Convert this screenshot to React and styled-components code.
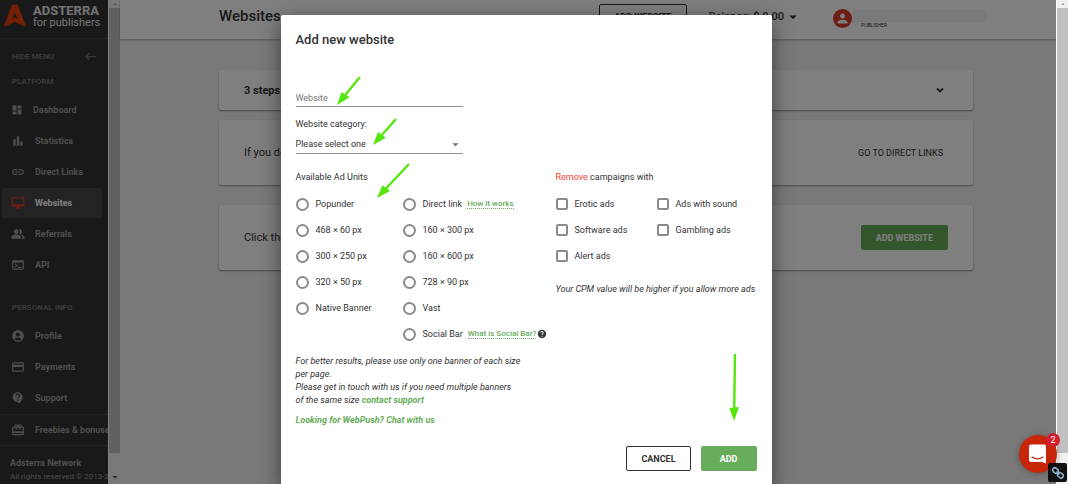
import styled, { createGlobalStyle } from "styled-components";
import {
  MdAccountCircle,
  MdArrowDropDown,
  MdArrowDropUp,
  MdBarChart,
  MdContactSupport,
  MdDashboard,
  MdHelp,
  MdKeyboardBackspace,
  MdLink,
  MdOutlineDesktopMac,
  MdPayment,
  MdPeopleAlt,
  MdPerson,
  MdRedeem,
  MdTerminal,
} from "react-icons/md";

const platformLinks = [
  { label: "Dashboard", icon: MdDashboard, small: true },
  { label: "Statistics", icon: MdBarChart },
  { label: "Direct Links", icon: MdLink },
  { label: "Websites", icon: MdOutlineDesktopMac, active: true },
  { label: "Referrals", icon: MdPeopleAlt },
  { label: "API", icon: MdTerminal },
];

const personalLinks = [
  { label: "Profile", icon: MdAccountCircle },
  { label: "Payments", icon: MdPayment },
  { label: "Support", icon: MdContactSupport },
];

const leftUnits = [
  "Popunder",
  "468 × 60 px",
  "300 × 250 px",
  "320 × 50 px",
  "Native Banner",
];

const rightUnits = [
  { label: "Direct link", link: "How it works" },
  { label: "160 × 300 px" },
  { label: "160 × 600 px" },
  { label: "728 × 90 px" },
  { label: "Vast" },
  { label: "Social Bar", link: "What is Social Bar?", help: true },
];

const leftFilters = ["Erotic ads", "Software ads", "Alert ads"];
const rightFilters = ["Ads with sound", "Gambling ads"];

// x1, y1 is the tail, x2, y2 is the tip
const arrows = [
  { x1: 360, y1: 77, x2: 337, y2: 105 },
  { x1: 396, y1: 119, x2: 373, y2: 145 },
  { x1: 409, y1: 164, x2: 377, y2: 198 },
  { x1: 735, y1: 354, x2: 734, y2: 421 },
];

const Arrow = ({ x1, y1, x2, y2 }) => {
  const length = Math.hypot(x2 - x1, y2 - y1);
  const angle = (Math.atan2(y2 - y1, x2 - x1) * 180) / Math.PI;
  return (
    <g transform={`translate(${x1} ${y1}) rotate(${angle})`}>
      <line
        x1="1"
        y1="0"
        x2={length - 11}
        y2="0"
        stroke="#55e60f"
        strokeWidth="2.4"
        strokeLinecap="round"
      />
      <path
        d={`M${length} 0 L${length - 14} -4.8 L${length - 13} 4.8 Z`}
        fill="#55e60f"
      />
    </g>
  );
};

const MenuItem = ({ item }) => {
  const Icon = item.icon;
  return (
    <MenuLink href="#" $active={item.active} $small={item.small}>
      <Icon />
      {item.label}
    </MenuLink>
  );
};

const Sidebar = () => (
  <SideWrapper>
    <SideContent>
      <Logo href="#">
        <svg width="22" height="23" viewBox="0 0 22 23">
          <path
            d="M8.6 1.2h4.6L20.9 21.8 10.9 17.2 0.9 21.8Z M10.9 6.4 6.6 16.8 10.9 14 15.2 16.8Z"
            fill="#e6400d"
            stroke="#e6400d"
            strokeWidth="1.4"
            strokeLinejoin="round"
            fillRule="evenodd"
          />
        </svg>
        <LogoText>
          <LogoName>ADSTERRA</LogoName>
          <LogoSub>for publishers</LogoSub>
        </LogoText>
      </Logo>
      <HideMenu type="button">
        HIDE MENU
        <MdKeyboardBackspace size={15} />
      </HideMenu>
      <MenuTitle>PLATFORM</MenuTitle>
      <Menu>
        {platformLinks.map((item) => (
          <MenuItem key={item.label} item={item} />
        ))}
      </Menu>
      <MenuTitle $spaced>PERSONAL INFO</MenuTitle>
      <Menu>
        {personalLinks.map((item) => (
          <MenuItem key={item.label} item={item} />
        ))}
      </Menu>
      <Extra>
        <MenuItem item={{ label: "Freebies & bonuses", icon: MdRedeem }} />
      </Extra>
      <Footer>
        <FooterName>Adsterra Network</FooterName>
        <FooterText>All rights reserved © 2013-2021</FooterText>
      </Footer>
    </SideContent>
    <ScrollBar>
      <MdArrowDropUp />
      <ScrollThumb />
      <MdArrowDropDown />
    </ScrollBar>
  </SideWrapper>
);

const AddWebsiteModal = () => (
  <Modal role="dialog" aria-labelledby="modal-title">
    <ModalTitle id="modal-title">Add new website</ModalTitle>
    <TextInput type="text" placeholder="Website" aria-label="Website" />
    <FieldLabel htmlFor="category">Website category:</FieldLabel>
    <SelectHolder>
      <Select id="category">
        <option>Please select one</option>
      </Select>
      <MdArrowDropDown />
    </SelectHolder>
    <Columns>
      <div>
        <GroupTitle>Available Ad Units</GroupTitle>
        <Options $first={107}>
          <OptionList>
            {leftUnits.map((unit) => (
              <Option key={unit}>
                <OptionLabel>
                  <Radio type="radio" name="unit" />
                  {unit}
                </OptionLabel>
              </Option>
            ))}
          </OptionList>
          <OptionList>
            {rightUnits.map((unit) => (
              <Option key={unit.label}>
                <OptionLabel>
                  <Radio type="radio" name="unit" />
                  {unit.label}
                </OptionLabel>
                {unit.link && <HintLink href="#">{unit.link}</HintLink>}
                {unit.help && <MdHelp size={10} />}
              </Option>
            ))}
          </OptionList>
        </Options>
        <Notes>
          <Note>
            For better results, please use only one banner of each size per
            page.
            <br />
            Please get in touch with us if you need multiple banners
            <br />
            of the same size <NoteLink href="#">contact support</NoteLink>
          </Note>
          <Note>
            <NoteLink href="#">Looking for WebPush? Chat with us</NoteLink>
          </Note>
        </Notes>
      </div>
      <div>
        <GroupTitle>
          <Red>Remove</Red> campaigns with
        </GroupTitle>
        <Options $first={101}>
          <OptionList>
            {leftFilters.map((filter) => (
              <Option key={filter}>
                <OptionLabel>
                  <Checkbox type="checkbox" />
                  {filter}
                </OptionLabel>
              </Option>
            ))}
          </OptionList>
          <OptionList>
            {rightFilters.map((filter) => (
              <Option key={filter}>
                <OptionLabel>
                  <Checkbox type="checkbox" />
                  {filter}
                </OptionLabel>
              </Option>
            ))}
          </OptionList>
        </Options>
        <CpmNote>Your CPM value will be higher if you allow more ads</CpmNote>
      </div>
    </Columns>
    <ModalButtons>
      <OutlineButton type="button">CANCEL</OutlineButton>
      <GreenButton type="button">ADD</GreenButton>
    </ModalButtons>
  </Modal>
);

export default function App() {
  return (
    <>
      <GlobalStyle />
      <Container>
        <Page>
          <Sidebar />
          <Main>
            <Header>
              <PageTitle>Websites</PageTitle>
              <HeaderRight>
                <OutlineButton type="button">ADD WEBSITE</OutlineButton>
                <Balance>
                  <span>
                    Balance: <b>$ 0.00</b>
                  </span>
                  <MdArrowDropDown size={18} />
                </Balance>
                <User>
                  <Avatar>
                    <MdPerson size={15} />
                  </Avatar>
                  <UserInfo>
                    <UserName />
                    <UserRole>PUBLISHER</UserRole>
                  </UserInfo>
                </User>
              </HeaderRight>
            </Header>
            <Cards>
              <Card $small>
                <CardTitle>3 steps</CardTitle>
                <Chevron type="button" aria-label="Expand">
                  <svg width="16" height="14" viewBox="0 0 16 14">
                    <path
                      d="M5 5.5l3 3 3-3"
                      fill="none"
                      stroke="currentColor"
                      strokeWidth="1.8"
                    />
                  </svg>
                </Chevron>
              </Card>
              <Card>
                <CardText>If you do</CardText>
                <CardLink href="#">GO TO DIRECT LINKS</CardLink>
              </Card>
              <Card $spaced>
                <CardText>Click the</CardText>
                <GreenButton type="button">ADD WEBSITE</GreenButton>
              </Card>
            </Cards>
          </Main>
          <Overlay>
            <AddWebsiteModal />
          </Overlay>
        </Page>
        <ScrollBar>
          <MdArrowDropUp />
          <ScrollThumb />
          <MdArrowDropDown />
        </ScrollBar>
        <Arrows width="1068" height="484">
          {arrows.map((arrow) => (
            <Arrow key={arrow.y1} {...arrow} />
          ))}
        </Arrows>
        <Chat type="button" aria-label="Open chat">
          <svg width="20" height="20" viewBox="0 0 20 20">
            <path
              d="M3 0.5h13a2 2 0 0 1 2 2v17l-4-1.5h-11a2 2 0 0 1-2-2v-13.5a2 2 0 0 1 2-2Z"
              fill="#fff"
            />
            <path
              d="M4 13q5.5 3.6 11 0"
              fill="none"
              stroke="#c8260b"
              strokeWidth="1.2"
              strokeLinecap="round"
            />
          </svg>
          <ChatCount>2</ChatCount>
        </Chat>
        <LinkBadge>
          <svg width="14" height="14" viewBox="0 0 14 14">
            <g fill="none" stroke="#8fb4d0" strokeWidth="1.5">
              <rect
                x="-3"
                y="-2.2"
                width="6"
                height="4.4"
                rx="2.2"
                transform="translate(4.5 4.5) rotate(40)"
              />
              <rect
                x="-3"
                y="-2.2"
                width="6"
                height="4.4"
                rx="2.2"
                transform="translate(9.4 9.3) rotate(40)"
              />
              <path d="M5.5 5.5l3 3" />
            </g>
          </svg>
        </LinkBadge>
      </Container>
    </>
  );
}

const GlobalStyle = createGlobalStyle`
  * {
    box-sizing: border-box;
  }
  body {
    margin: 0;
    font-family: Roboto, "Liberation Sans", sans-serif;
    font-size: 9px;
    color: #333;
  }
  button, input, select {
    font-family: inherit;
    font-size: inherit;
    color: inherit;
  }
  a {
    text-decoration: none;
    color: inherit;
  }
  svg {
    flex-shrink: 0;
  }
`;

const Container = styled.div`
  position: relative;
  display: flex;
  height: 100vh;
  overflow: hidden;
`;
const Page = styled.div`
  position: relative;
  display: flex;
  flex: 1;
  min-width: 0;
  overflow: hidden;
  background: #f2f2f2;
`;
const Overlay = styled.div`
  position: absolute;
  inset: 0;
  display: flex;
  justify-content: center;
  align-items: flex-start;
  padding: 15px 4px 0 0;
  background: rgba(0, 0, 0, 0.5);
`;

const ScrollBar = styled.div`
  display: flex;
  flex-direction: column;
  align-items: center;
  flex-shrink: 0;
  width: 12px;
  padding-bottom: 1px;
  border-left: 1px solid #fff;
  background: #f1f1f1;
  color: #888;
  svg {
    width: 12px;
    height: 8px;
  }
  svg:last-child {
    height: 30px;
    padding-top: 18px;
    color: #444;
  }
`;
const ScrollThumb = styled.div`
  flex: 1;
  align-self: stretch;
  background: #c1c1c1;
`;

const SideWrapper = styled.aside`
  display: flex;
  width: 120px;
  flex-shrink: 0;
`;
const SideContent = styled.div`
  flex: 1;
  min-width: 0;
  overflow: hidden;
  background: #333;
  color: #9c9c9c;
`;
const Logo = styled.a`
  display: flex;
  gap: 7px;
  height: 39px;
  padding: 4px 0 0 4px;
  border-bottom: 1px solid #484848;
`;
const LogoText = styled.div`
  color: #e6e6e6;
`;
const LogoName = styled.div`
  font-size: 13px;
  line-height: 13px;
  font-weight: 700;
`;
const LogoSub = styled.div`
  font-size: 11px;
  line-height: 11px;
`;
const HideMenu = styled.button`
  display: flex;
  align-items: center;
  justify-content: space-between;
  width: 100%;
  height: 34px;
  padding: 0 10px 0 12px;
  border: 0;
  background: none;
  color: #757575;
  font-size: 8px;
  font-weight: 700;
`;
const MenuTitle = styled.div`
  padding: ${(props) => (props.$spaced ? "23px" : "4px")} 0 8px 12px;
  color: #757575;
  font-size: 8px;
  line-height: 10px;
  font-weight: 700;
`;
const Menu = styled.nav`
  display: flex;
  flex-direction: column;
  gap: 1px;
`;
const MenuLink = styled.a`
  display: flex;
  align-items: center;
  gap: 10px;
  height: 30px;
  margin: 0 6px 0 2px;
  padding-left: 9px;
  border-radius: 2px;
  font-weight: 700;
  white-space: nowrap;
  background: ${(props) => (props.$active ? "#474747" : "none")};
  color: ${(props) => (props.$active ? "#fff" : "inherit")};
  svg {
    width: ${(props) => (props.$small ? "12px" : "14px")};
    height: 14px;
    color: ${(props) => (props.$active ? "#e03a28" : "inherit")};
  }
`;
const Extra = styled.div`
  margin-top: 1px;
  border: 1px solid #484848;
  border-width: 1px 0;
`;
const Footer = styled.div`
  padding: 11px 0 0 10px;
  white-space: nowrap;
`;
const FooterName = styled.div`
  line-height: 13px;
  font-weight: 700;
`;
const FooterText = styled.div`
  font-size: 8px;
  line-height: 14px;
`;

const Main = styled.main`
  flex: 1;
  min-width: 0;
`;
const Header = styled.header`
  display: flex;
  align-items: flex-start;
  justify-content: space-between;
  height: 39px;
  padding: 4px 70px 0 99px;
  background: #fff;
  box-shadow: 0 1px 2px rgba(0, 0, 0, 0.3);
`;
const PageTitle = styled.h1`
  margin: 0;
  font-size: 15px;
  line-height: 25px;
  font-weight: 500;
`;
const HeaderRight = styled.div`
  display: flex;
  align-items: center;
`;
const Balance = styled.div`
  display: flex;
  align-items: center;
  margin-left: 22px;
  font-size: 11px;
  b {
    font-weight: 500;
  }
`;
const User = styled.div`
  display: flex;
  margin-left: 31px;
`;
const Avatar = styled.div`
  display: flex;
  align-items: center;
  justify-content: center;
  width: 19px;
  height: 19px;
  margin-top: 3px;
  border-radius: 50%;
  background: #d93a2b;
  color: #fff;
`;
const UserInfo = styled.div`
  margin-top: 4px;
`;
const UserName = styled.div`
  width: 134px;
  height: 12px;
  background: #f2f2f2;
`;
const UserRole = styled.div`
  padding-left: 9px;
  font-size: 5px;
  line-height: 6px;
`;

const Cards = styled.div`
  padding: 31px 83px 0 99px;
`;
const Card = styled.section`
  display: flex;
  align-items: center;
  justify-content: space-between;
  height: ${(props) => (props.$small ? "40px" : "65px")};
  margin-bottom: 10px;
  margin-top: ${(props) => (props.$spaced ? "20px" : "0")};
  padding: 0 25px;
  border-radius: 2px;
  background: #fff;
  box-shadow: 0 1px 2px rgba(0, 0, 0, 0.4);
`;
const CardTitle = styled.h2`
  margin: 0;
  font-size: 11px;
  font-weight: 700;
`;
const CardText = styled.div`
  font-size: 11px;
`;
const CardLink = styled.a`
  padding-right: 5px;
`;
const Chevron = styled.button`
  display: flex;
  padding: 0;
  border: 0;
  background: none;
`;

const Button = styled.button`
  height: 25px;
  min-width: 56px;
  padding: 0 14px;
  border: 1px solid;
  border-radius: 2px;
  font-weight: 700;
`;
const OutlineButton = styled(Button)`
  border-color: #333;
  background: #fff;
`;
const GreenButton = styled(Button)`
  border-color: #67ac5b;
  background: #67ac5b;
  color: #fff;
`;

const Modal = styled.div`
  display: flex;
  flex-direction: column;
  width: 491px;
  max-width: 100%;
  padding: 15px;
  border-radius: 2px 2px 0 0;
  background: #fff;
  box-shadow: 0 6px 20px rgba(0, 0, 0, 0.5);
`;
const ModalTitle = styled.h2`
  margin: 0 0 39px;
  font-size: 13px;
  line-height: 20px;
  font-weight: 500;
`;
const TextInput = styled.input`
  width: 167px;
  height: 18px;
  padding: 0;
  border: 0;
  border-bottom: 1px solid #949494;
  background: none;
  &::placeholder {
    color: #757575;
  }
`;
const FieldLabel = styled.label`
  margin-top: 11px;
  line-height: 13px;
`;
const SelectHolder = styled.div`
  position: relative;
  display: flex;
  align-items: center;
  width: 167px;
  margin-top: 4px;
  border-bottom: 1px solid #949494;
  svg {
    position: absolute;
    right: 0;
    width: 15px;
    height: 15px;
    color: #757575;
    pointer-events: none;
  }
`;
const Select = styled.select`
  flex: 1;
  height: 18px;
  padding: 0;
  border: 0;
  background: none;
  appearance: none;
`;
const Columns = styled.div`
  display: grid;
  grid-template-columns: 260px 1fr;
  margin-top: 17px;
`;
const GroupTitle = styled.div`
  margin-bottom: 7px;
  line-height: 13px;
`;
const Red = styled.span`
  color: #f44336;
`;
const Options = styled.div`
  display: grid;
  grid-template-columns: ${(props) => props.$first}px 1fr;
`;
const OptionList = styled.div`
  display: flex;
  flex-direction: column;
`;
const Option = styled.div`
  display: flex;
  align-items: center;
  height: 26px;
  white-space: nowrap;
`;
const OptionLabel = styled.label`
  display: flex;
  align-items: center;
`;
const Radio = styled.input`
  appearance: none;
  width: 13px;
  height: 13px;
  margin: 0 7px 0 0;
  border: 2px solid #8a8a8a;
  border-radius: 50%;
  &:checked {
    background: #67ac5b;
  }
`;
const Checkbox = styled(Radio)`
  width: 12px;
  height: 12px;
  border-radius: 2px;
`;
const HintLink = styled.a`
  margin: 0 1px 0 5px;
  border-bottom: 1px dotted #67ac5b;
  color: #67ac5b;
  font-size: 8px;
  line-height: 9px;
  font-weight: 500;
`;
const Notes = styled.div`
  display: flex;
  flex-direction: column;
  gap: 7px;
  width: 230px;
  margin-top: 8px;
`;
const Note = styled.p`
  margin: 0;
  line-height: 13px;
  font-style: italic;
`;
const NoteLink = styled.a`
  color: #67ac5b;
  font-weight: 700;
`;
const CpmNote = styled.p`
  margin: 14px 0 0;
  line-height: 13px;
  font-style: italic;
`;
const ModalButtons = styled.div`
  display: flex;
  justify-content: flex-end;
  gap: 10px;
  margin-top: 19px;
`;

const Arrows = styled.svg`
  position: absolute;
  top: 0;
  left: 0;
  pointer-events: none;
`;
const Chat = styled.button`
  position: absolute;
  right: 11px;
  bottom: 11px;
  display: flex;
  align-items: center;
  justify-content: center;
  width: 38px;
  height: 38px;
  padding: 0;
  border: 0;
  border-radius: 50%;
  background: #c8260b;
  box-shadow: 0 1px 6px rgba(0, 0, 0, 0.3);
`;
const ChatCount = styled.span`
  position: absolute;
  top: -2px;
  right: -3px;
  width: 14px;
  border-radius: 50%;
  background: #d3202f;
  color: #fff;
  font-size: 9px;
  line-height: 14px;
  text-align: center;
`;
const LinkBadge = styled.div`
  position: absolute;
  right: 1px;
  bottom: 2px;
  display: flex;
  align-items: center;
  justify-content: center;
  width: 19px;
  height: 19px;
  border-radius: 2px;
  background: #111;
`;
